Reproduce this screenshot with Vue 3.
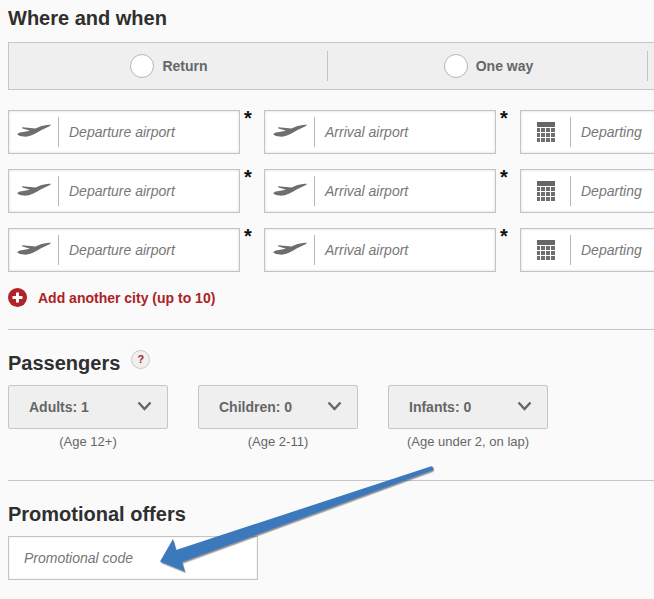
<script setup>
const rows = [0, 1, 2]
const passengers = [
  { label: 'Adults: 1', note: '(Age 12+)' },
  { label: 'Children: 0', note: '(Age 2-11)' },
  { label: 'Infants: 0', note: '(Age under 2, on lap)' }
]
const plane = 'M34 .8C30 .5 26 1.500 22 3L18.500 4.600 5.200 3.200 5 4.200 13 6.800 1.800 8.800 .2 10.600 3 12 8.500 12.800C14 12.400 19 9.200 24 6.300L33 2Z'
</script>

<template>
  <div class="page">
    <h2 class="title first">Where and when</h2>

    <div class="trip">
      <label class="trip-opt"><span class="radio"></span><span>Return</span></label>
      <span class="trip-sep"></span>
      <label class="trip-opt"><span class="radio"></span><span>One way</span></label>
      <span class="trip-sep"></span>
      <span></span>
    </div>

    <div class="rows">
      <div v-for="r in rows" :key="r" class="row">
        <div class="cell">
          <div class="field">
            <span class="ico">
              <svg width="34" height="14" viewBox="0 0 34 14"><path :d="plane" fill="#6e6e6e"/></svg>
            </span>
            <span class="txt">Departure airport</span>
          </div>
          <span class="star">*</span>
        </div>
        <div class="cell">
          <div class="field">
            <span class="ico">
              <svg width="34" height="14" viewBox="0 0 34 14"><path :d="plane" fill="#6e6e6e"/></svg>
            </span>
            <span class="txt">Arrival airport</span>
          </div>
          <span class="star">*</span>
        </div>
        <div class="cell">
          <div class="field">
            <span class="ico">
              <span class="cal"><i v-for="n in 12" :key="n"></i></span>
            </span>
            <span class="txt">Departing</span>
          </div>
        </div>
      </div>
    </div>

    <a class="add">
      <svg width="19" height="19" viewBox="0 0 19 19"><circle cx="9.500" cy="9.500" r="9.500" fill="#b02426"/><path d="M9.500 4.500v10M4.500 9.500h10" stroke="#fff" stroke-width="3"/></svg>
      <span>Add another city (up to 10)</span>
    </a>

    <hr class="rule rule-a" />

    <div class="head-help">
      <h2 class="title">Passengers</h2>
      <span class="help">?</span>
    </div>

    <div class="pax">
      <div v-for="p in passengers" :key="p.label" class="pax-item">
        <div class="select">
          <span>{{ p.label }}</span>
          <svg class="chev" width="15" height="10" viewBox="0 0 15 10"><path d="M1.500 1.500L7.500 8l6-6.500" fill="none" stroke="#666" stroke-width="2.400"/></svg>
        </div>
        <div class="note">{{ p.note }}</div>
      </div>
    </div>

    <hr class="rule rule-b" />

    <h2 class="title promo">Promotional offers</h2>
    <div class="field code"><span class="txt">Promotional code</span></div>

    <svg class="arrow" width="654" height="599" viewBox="0 0 654 599">
      <defs>
        <filter id="sh" x="-5%" y="-5%" width="110%" height="110%">
          <feDropShadow dx="1" dy="1.500" stdDeviation=".6" flood-color="#555" flood-opacity=".65"/>
        </filter>
      </defs>
      <path d="M430.500 466.500C431.800 466 433 467 433.200 468C433.300 469 432.800 470 431.500 470.500L182 562 184.800 571.500 160 561.500 173 539 176 550Z" fill="#3a78bc" filter="url(#sh)"/>
    </svg>
  </div>
</template>

<style>
html, body { margin: 0; background: #fafafa; }
</style>

<style scoped>
.page {
  position: relative;
  width: 654px;
  height: 599px;
  overflow: hidden;
  background: #fafafa;
  font-family: "Liberation Sans", Arial, sans-serif;
  padding-left: 8px;
  box-sizing: border-box;
}
.title {
  margin: 0;
  font-size: 20px;
  line-height: 24px;
  font-weight: 700;
  color: #2f2f2f;
}
.first { padding-top: 6px; }
.trip {
  margin-top: 12px;
  width: 800px;
  height: 48px;
  box-sizing: border-box;
  border: 1px solid #c6c6c6;
  background: #efefef;
  display: grid;
  grid-template-columns: 318px 1px 319px 1px 1fr;
  align-items: center;
  color: #666;
  font-size: 14px;
  font-weight: 700;
}
.trip-opt {
  display: flex;
  align-items: center;
  justify-content: center;
  gap: 8px;
  padding-left: 2px;
}
.trip-sep { height: 30px; background: #c4c4c4; }
.radio {
  width: 24px;
  height: 24px;
  border-radius: 50%;
  background: #fff;
  border: 1px solid #b5b5b5;
  box-sizing: border-box;
}
.rows {
  margin-top: 20px;
  display: flex;
  flex-direction: column;
  gap: 15px;
}
.row {
  display: flex;
  gap: 24px;
  width: 760px;
}
.cell {
  position: relative;
  flex: none;
  width: 232px;
}
.field {
  height: 44px;
  box-sizing: border-box;
  border: 1px solid #c4c4c4;
  background: #fff;
  box-shadow: inset 0 0 3px #d8d8d8;
  display: flex;
  align-items: center;
}
.ico {
  flex: none;
  width: 50px;
  height: 30px;
  border-right: 1px solid #b8b8b8;
  display: flex;
  align-items: center;
  justify-content: center;
  box-sizing: border-box;
}
.ico svg { display: block; margin-top: -2px; }
.txt {
  margin-left: 10px;
  font-size: 14px;
  font-style: italic;
  color: #777;
  white-space: nowrap;
}
.star {
  position: absolute;
  left: 236px;
  top: -4px;
  font-size: 20px;
  font-weight: 700;
  line-height: 24px;
  color: #111;
}
.cal {
  display: grid;
  grid-template-columns: repeat(4, 3.750px);
  grid-auto-rows: 4px;
  gap: 1px;
  padding-top: 6px;
  width: 18px;
  height: 14px;
  background: linear-gradient(#666 0 5px, transparent 5px);
}
.cal i { background: #6e6e6e; }
.add {
  margin-top: 16px;
  display: flex;
  align-items: center;
  gap: 11px;
  color: #ad2225;
  font-size: 14px;
  font-weight: 700;
  height: 19px;
}
.add svg { flex: none; }
.rule {
  border: 0;
  height: 1px;
  background: #c6c6c6;
  margin: 0;
  width: 660px;
}
.rule-a { margin-top: 22px; }
.head-help {
  margin-top: 21px;
  display: flex;
  align-items: center;
  gap: 11px;
}
.help {
  width: 19px;
  height: 19px;
  box-sizing: border-box;
  border: 1px solid #c9c9c9;
  border-radius: 50%;
  background: #f0f0f0;
  color: #ad2225;
  font-size: 11px;
  font-weight: 700;
  text-align: center;
  line-height: 17px;
  margin-top: -8px;
}
.pax {
  margin-top: 10px;
  display: flex;
  gap: 30px;
}
.pax-item { width: 160px; }
.select {
  height: 44px;
  box-sizing: border-box;
  border: 1px solid #c6c6c6;
  border-radius: 2px;
  background: #efefef;
  color: #666;
  font-size: 14px;
  font-weight: 700;
  display: flex;
  align-items: center;
  justify-content: space-between;
  padding: 0 15px 0 20px;
}
.chev { margin-top: -3px; }
.note {
  margin-top: 5px;
  text-align: center;
  font-size: 13px;
  line-height: 16px;
  color: #666;
}
.rule-b { margin-top: 30px; }
.promo { margin-top: 21px; }
.code {
  margin-top: 10px;
  width: 250px;
  box-shadow: inset 0 0 2px #e0e0e0;
}
.code .txt { margin-left: 15px; }
.arrow {
  position: absolute;
  left: 0;
  top: 0;
  pointer-events: none;
}
</style>
